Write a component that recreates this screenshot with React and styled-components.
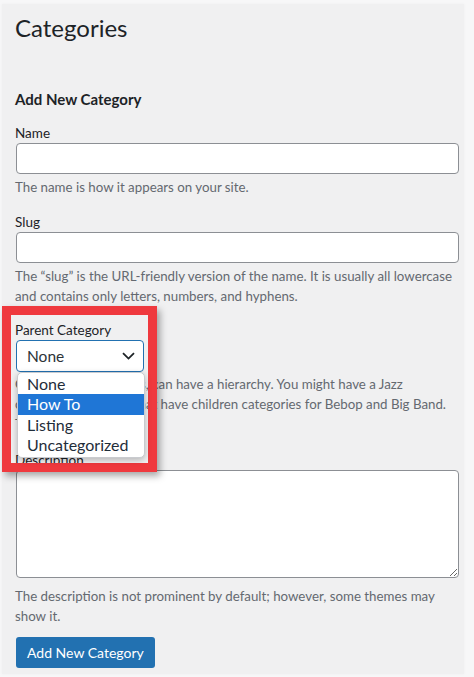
import React from "react";
import styled, { createGlobalStyle } from "styled-components";

const GlobalStyle = createGlobalStyle`
  body {
    margin: 0;
    background: #f7f7f8;
    font-family: Lato, "Noto Sans", Arial, sans-serif;
    color: #1d2327;
  }
`;

const Panel = styled.div`
  position: relative;
  margin: 4px 10px 3px 2px;
  padding: 9px 0 6px 13px;
  background: #f0f0f1;
  box-shadow: 0 0 3px rgba(0, 0, 0, 0.04);
`;

const Title = styled.h1`
  margin: 0;
  font-size: 24px;
  font-weight: 400;
  line-height: 29px;
  color: #1d2327;
`;

const SubTitle = styled.h2`
  margin: 47px 0 15px;
  font-size: 15px;
  font-weight: 700;
  line-height: 20px;
  color: #1d2327;
`;

const Field = styled.div`
  position: relative;
  margin-bottom: ${(p) => p.gap || 16}px;
`;

const Label = styled.label`
  display: block;
  font-size: 13.5px;
  line-height: 18px;
  margin-bottom: 1px;
  color: #1d2327;
`;

const TextInput = styled.input`
  display: block;
  box-sizing: border-box;
  width: 443px;
  height: 31px;
  margin: 0 0 0 1px;
  border: 1px solid #8c8f94;
  border-radius: 4px;
  background: #fff;
`;

const TextArea = styled.textarea`
  display: block;
  box-sizing: border-box;
  width: 443px;
  height: 108px;
  margin: 0 0 0 1px;
  border: 1px solid #8c8f94;
  border-radius: 4px;
  background: #fff;
  resize: vertical;
`;

const Help = styled.p`
  margin: ${(p) => p.top || 3}px 0 0;
  font-size: 13.3px;
  line-height: 20px;
  color: #646970;
  width: ${(p) => p.width || 453}px;
`;

const Select = styled.div`
  display: flex;
  align-items: center;
  justify-content: space-between;
  box-sizing: border-box;
  width: 128px;
  height: 32px;
  margin-left: 1px;
  padding: 0 8px 0 10px;
  border: 1.5px solid #2271b1;
  border-radius: 4px;
  background: #fff;
  font-size: 15.5px;
  color: #2c3338;
`;

const Menu = styled.ul`
  position: absolute;
  left: 2px;
  top: 51px;
  z-index: 3;
  width: 126px;
  margin: 0;
  padding: 1px 0 2px;
  list-style: none;
  background: #fff;
  border: 1px solid #c9cbcf;
  border-radius: 5px;
  box-shadow: 0 2px 6px rgba(0, 0, 0, 0.25);
  overflow: hidden;
`;

const Option = styled.li`
  padding-left: 9px;
  font-size: 16px;
  line-height: 20.3px;
  color: ${(p) => (p.active ? "#fff" : "#1f2d3a")};
  background: ${(p) => (p.active ? "#1f76d6" : "transparent")};
`;

const Highlight = styled.div`
  position: absolute;
  left: 0;
  top: 302px;
  z-index: 2;
  width: 155px;
  height: 166px;
  box-sizing: border-box;
  border: 9px solid #ef393e;
  box-shadow: 3px 4px 7px rgba(0, 0, 0, 0.35);
  pointer-events: none;
`;

const Button = styled.button`
  display: block;
  margin-left: 1px;
  height: 31px;
  padding: 0 11px;
  border: none;
  border-radius: 3px;
  background: #2271b1;
  color: #fff;
  font-family: inherit;
  font-size: 14px;
`;

const Chevron = () => (
  <svg width="13" height="8" viewBox="0 0 13 8">
    <path d="M1 1.2 L6.5 6.6 L12 1.2" fill="none" stroke="#1d2327" strokeWidth="1.8" />
  </svg>
);

const options = ["None", "How To", "Listing", "Uncategorized"];

export default function App() {
  return (
    <>
      <GlobalStyle />
      <Panel>
        <Title>Categories</Title>
        <SubTitle>Add New Category</SubTitle>

        <Field gap={16}>
          <Label>Name</Label>
          <TextInput type="text" />
          <Help>The name is how it appears on your site.</Help>
        </Field>

        <Field gap={15}>
          <Label>Slug</Label>
          <TextInput type="text" />
          <Help>
            The “slug” is the URL-friendly version of the name. It is usually all lowercase and
            contains only letters, numbers, and hyphens.
          </Help>
        </Field>

        <Field gap={17}>
          <Label>Parent Category</Label>
          <Select>
            None
            <Chevron />
          </Select>
          <Menu>
            {options.map((o) => (
              <Option key={o} active={o === "How To"}>
                {o}
              </Option>
            ))}
          </Menu>
          <Help top={2} width={441}>
            Categories, unlike tags, can have a hierarchy. You might have a Jazz category, and
            under that have children categories for Bebop and Big Band. Totally optional.
          </Help>
        </Field>

        <Field gap={11}>
          <Label>Description</Label>
          <TextArea />
          <Help top={8}>
            The description is not prominent by default; however, some themes may show it.
          </Help>
        </Field>

        <Button>Add New Category</Button>
        <Highlight />
      </Panel>
    </>
  );
}
